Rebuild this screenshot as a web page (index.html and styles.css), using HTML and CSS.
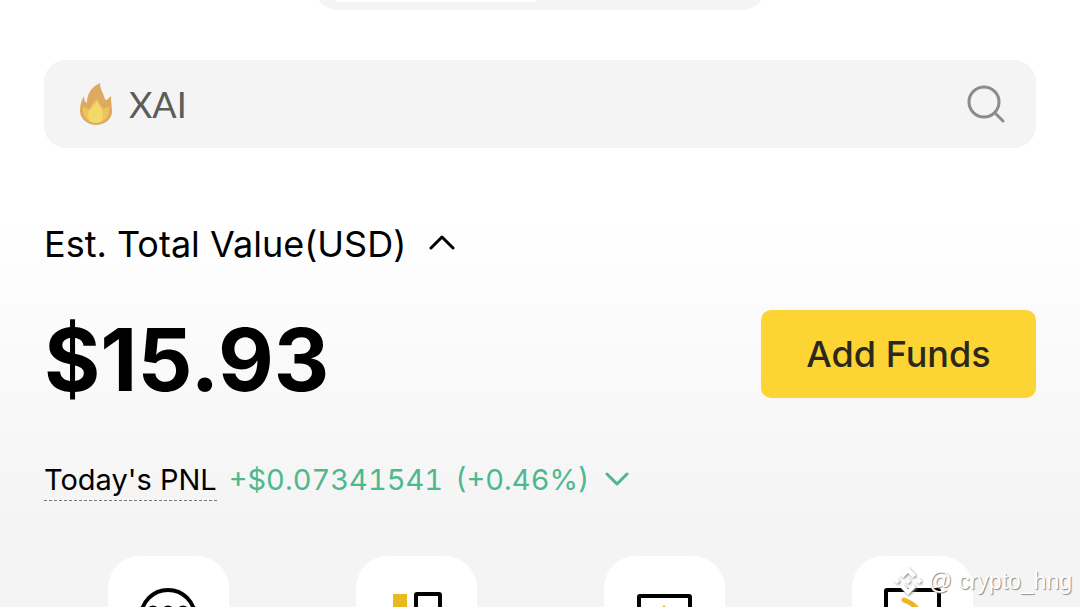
FILE: index.html
```html
<!DOCTYPE html>
<html lang="en">
<head>
  <meta charset="UTF-8">
  <meta name="viewport" content="width=device-width, initial-scale=1.0">
  <title>Wallet</title>
  <link rel="stylesheet" href="styles.css">
</head>
<body>
  <header class="topbar">
    <div class="switch">
      <button class="switch-button active" aria-label="First view"></button>
      <button class="switch-button" aria-label="Second view"></button>
    </div>
  </header>

  <main>
    <form class="search">
      <svg class="flame" viewBox="0 0 34 44" aria-hidden="true">
        <path fill="#dfa95f" d="M21 1c0 7 4 11 5 16 1 2 2 1 6-3 0 6 1 11 1 17-1 7-8 12-16 12S1 37 1 29c0-5 1-10 4-15 0 4 1 6 3 7C8 12 12 5 21 1z"/>
        <path fill="#ecc45c" d="M18 17c2 5 5 6 6 10 2-1 3-2 6-2 1 9-4 16-13 16S3 33 4 25c3 1 5 2 7 2 1-5 4-6 7-10z"/>
        <path fill="#f2d969" d="M18 19c2 5 6 8 6 14s-3 8-7 8-8-2-8-8 6-8 9-14z"/>
      </svg>
      <input type="text" value="XAI" aria-label="Search">
      <button class="search-button" aria-label="Submit search">
        <svg viewBox="0 0 40 40"><circle cx="18" cy="18" r="15"/><path d="M29 29l8 8"/></svg>
      </button>
    </form>

    <section class="balance">
      <button class="total-label">
        Est. Total Value(USD)
        <svg class="chevron" viewBox="0 0 28 18"><path d="M3 13L14 2l11 11"/></svg>
      </button>
      <div class="total-row">
        <h1>$15.93</h1>
        <button class="add-funds">Add Funds</button>
      </div>
      <div class="pnl">
        <span class="pnl-label">Today's PNL</span>
        <button class="pnl-value">
          <span>+$0.07341541</span>
          <span>(+0.46%)</span>
          <svg class="chevron" viewBox="0 0 24 16"><path d="M2 2l10 10L22 2"/></svg>
        </button>
      </div>
    </section>

    <nav class="shortcuts">
      <a href="#" class="shortcut" aria-label="Chat">
        <svg viewBox="0 0 60 60">
          <circle class="line" cx="30" cy="30" r="27"/>
          <circle class="line thin" cx="15" cy="25" r="5"/>
          <circle class="line thin" cx="30" cy="25" r="5"/>
          <circle class="line thin" cx="45" cy="25" r="5"/>
        </svg>
      </a>
      <a href="#" class="shortcut" aria-label="Dashboard">
        <svg viewBox="0 0 60 60">
          <path class="gold" d="M7 7h14v18H7z"/>
          <rect class="line" x="30" y="7" width="24" height="44" rx="1"/>
          <path class="gold" d="M7 34h14v20H7z"/>
        </svg>
      </a>
      <a href="#" class="shortcut" aria-label="Deposit">
        <svg viewBox="0 0 60 60">
          <rect class="line" x="5" y="9" width="51" height="42" rx="1"/>
          <path class="gold" d="M30 18l9 11-9 11-9-11z"/>
        </svg>
      </a>
      <a href="#" class="shortcut" aria-label="Cast">
        <svg viewBox="0 0 60 60">
          <rect class="line" x="4" y="3" width="53" height="48" rx="1"/>
          <path class="line arc" d="M22 13c9 3 16 9 19 21"/>
        </svg>
      </a>
    </nav>
  </main>

  <div class="watermark">
    <svg viewBox="0 0 28 28">
      <path d="M14 0l8 8-3 3-5-5-5 5-3-3zM3 11l3 3-3 3-3-3zM14 11l3 3-3 3-3-3zM25 11l3 3-3 3-3-3zM9 17l5 5 5-5 3 3-8 8-8-8z"/>
    </svg>
    <span>@ crypto_hng</span>
  </div>
</body>
</html>
```

FILE: styles.css
```css
* { box-sizing: border-box; }
body {
  margin: 0;
  height: 100vh;
  overflow: hidden;
  position: relative;
  font-family: Inter, Lato, sans-serif;
  color: #000;
  background: linear-gradient(#fff 36%, #f4f4f4 86%);
}
button, input { font: inherit; color: inherit; border: 0; background: none; padding: 0; }
button { cursor: pointer; }
svg { display: block; flex: none; }

.topbar { display: flex; justify-content: center; align-items: flex-end; height: 10px; }
.switch {
  display: flex;
  width: 452px;
  height: 72px;
  padding: 8px;
  border-radius: 24px;
  background: #f4f4f4;
}
.switch-button { flex: 1; border-radius: 20px; }
.switch-button.active { flex: 0 0 228px; background: #fff; }

main { padding: 50px 44px 0; }
.search {
  display: flex;
  align-items: center;
  height: 88px;
  padding: 0 30px 0 35px;
  border-radius: 22px;
  background: #f4f4f4;
}
.flame { width: 34px; height: 44px; }
.search input {
  flex: 1;
  min-width: 0;
  margin-left: 16px;
  font-family: Lato, sans-serif;
  font-size: 36px;
  color: #5c5c58;
  outline: none;
}
.search-button svg { width: 40px; height: 40px; fill: none; stroke: #8c8c8c; stroke-width: 3; stroke-linecap: round; }

.chevron { fill: none; stroke: currentColor; stroke-width: 3; stroke-linecap: round; stroke-linejoin: round; }
.total-label {
  display: flex;
  align-items: center;
  gap: 22px;
  margin-top: 72px;
  font-size: 36px;
  line-height: 48px;
}
.total-label .chevron { width: 28px; height: 18px; }
.total-row { display: flex; align-items: center; justify-content: space-between; margin-top: 42px; }
h1 {
  margin: 0;
  padding-top: 12px;
  font-size: 86px;
  line-height: 76px;
  font-weight: 700;
}
.add-funds {
  width: 275px;
  height: 88px;
  border-radius: 10px;
  background: #fcd535;
  color: #2b281c;
  font-size: 36px;
  font-weight: 500;
}
.pnl { display: flex; align-items: flex-start; gap: 12px; margin-top: 62px; font-size: 29px; line-height: 40px; }
.pnl-label { border-bottom: 1px dashed #777; }
.pnl-value { display: flex; align-items: center; gap: 12px; color: #4db88f; font-variant-numeric: tabular-nums; }
.pnl-value .chevron { width: 24px; height: 16px; margin-left: 4px; }

.shortcuts { display: grid; grid-template-columns: repeat(4, 1fr); justify-items: center; margin-top: 55px; }
.shortcut {
  display: flex;
  align-items: center;
  justify-content: center;
  width: 121px;
  height: 121px;
  border-radius: 32px;
  background: #fff;
}
.shortcut svg { width: 60px; height: 60px; }
.line { fill: none; stroke: #000; stroke-width: 4; }
.thin { stroke-width: 3; }
.arc { stroke: #eab81f; stroke-width: 5; stroke-linecap: round; }
.gold { fill: #eab81f; }

.watermark {
  position: absolute;
  right: 8px;
  bottom: 10px;
  display: flex;
  align-items: center;
  gap: 6px;
  color: #fff;
  font: 23px/32px "Liberation Sans", sans-serif;
  text-shadow: 1px 1px 1px #888;
}
.watermark svg { width: 28px; height: 28px; fill: #fff; filter: drop-shadow(1px 1px 1px #888); }
```
